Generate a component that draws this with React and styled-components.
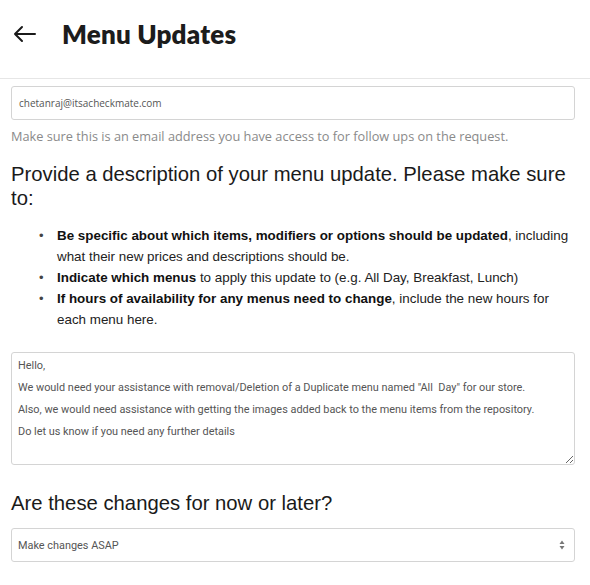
import React from "react";
import styled, { createGlobalStyle } from "styled-components";

const Global = createGlobalStyle`
  html, body { margin: 0; padding: 0; background: #fff; }
  body { font-family: "Liberation Sans", Arial, sans-serif; }
  * { box-sizing: border-box; }
`;

const Page = styled.div`
  width: 590px;
  display: flex;
  flex-direction: column;
`;

const Header = styled.header`
  display: flex;
  align-items: center;
  gap: 26px;
  height: 79px;
  padding: 0 0 10px 13px;
  border-bottom: 1px solid #e6e6e6;
`;

const BackButton = styled.button`
  display: flex;
  align-items: center;
  justify-content: center;
  padding: 0;
  border: none;
  background: none;
  width: 23px;
  height: 23px;
  color: #1a1a1a;
`;

const Title = styled.h1`
  margin: 0;
  font-family: "Lato", sans-serif;
  font-weight: 800;
  font-size: 26px;
  color: #1c1c1c;
  letter-spacing: 0.2px;
`;

const Body = styled.main`
  display: flex;
  flex-direction: column;
  padding: 7px 15px 0 11px;
`;

const Field = styled.div`
  height: 34px;
  display: flex;
  align-items: center;
  padding: 0 7px;
  border: 1px solid #d4d4d4;
  border-radius: 3px;
  font-family: "Open Sans", sans-serif;
  font-size: 10px;
  color: #555;
`;

const Help = styled.p`
  margin: 7px 0 0;
  font-family: "Open Sans", sans-serif;
  font-size: 12.75px;
  color: #8a8a8a;
`;

const Heading = styled.h2`
  margin: ${(p) => p.$top}px 0 0;
  font-family: "Liberation Sans", Arial, sans-serif;
  font-weight: 400;
  font-size: 20.3px;
  line-height: 24px;
  color: #1a1a1a;
`;

const List = styled.ul`
  margin: 15px 0 0;
  padding-left: 46px;
  list-style: none;
  font-size: 13.4px;
  line-height: 21px;
  color: #222;
`;

const Item = styled.li`
  &::before {
    content: "•";
    display: inline-block;
    width: 18px;
    margin-left: -18px;
    color: #444;
    font-size: 13px;
  }
`;

const Strong = styled.b`
  color: #111;
`;

const TextArea = styled.textarea`
  margin-top: 22px;
  height: 113px;
  width: 100%;
  resize: vertical;
  padding: 2px 6px;
  border: 1px solid #d4d4d4;
  border-radius: 3px;
  font-family: "Roboto", sans-serif;
  font-size: 10.9px;
  line-height: 22px;
  color: #555;
  outline: none;
`;

const SelectBox = styled(Field)`
  margin-top: 13px;
  font-family: "Roboto", sans-serif;
  font-size: 10.9px;
  padding: 0 6px;
  justify-content: space-between;
`;

const Arrows = styled.svg`
  width: 8px;
  height: 12px;
  margin-right: 2px;
`;

const text = `Hello,
We would need your assistance with removal/Deletion of a Duplicate menu named "All  Day" for our store.
Also, we would need assistance with getting the images added back to the menu items from the repository.
Do let us know if you need any further details`;

export default function App() {
  return (
    <Page>
      <Global />
      <Header>
        <BackButton aria-label="Back">
          <svg width="23" height="18" viewBox="0 0 23 18" fill="none" stroke="currentColor" strokeWidth="2" strokeLinecap="round" strokeLinejoin="round">
            <path d="M22 9H2M9 2L2 9l7 7" />
          </svg>
        </BackButton>
        <Title>Menu Updates</Title>
      </Header>
      <Body>
        <Field>chetanraj@itsacheckmate.com</Field>
        <Help>Make sure this is an email address you have access to for follow ups on the request.</Help>
        <Heading $top={17}>Provide a description of your menu update. Please make sure to:</Heading>
        <List>
          <Item><Strong>Be specific about which items, modifiers or options should be updated</Strong>, including what their new prices and descriptions should be.</Item>
          <Item><Strong>Indicate which menus</Strong> to apply this update to (e.g. All Day, Breakfast, Lunch)</Item>
          <Item><Strong>If hours of availability for any menus need to change</Strong>, include the new hours for each menu here.</Item>
        </List>
        <TextArea defaultValue={text} />
        <Heading $top={26}>Are these changes for now or later?</Heading>
        <SelectBox>
          <span>Make changes ASAP</span>
          <Arrows viewBox="0 0 8 12">
            <path d="M4 1.5L6.5 5H1.5z" fill="#777" />
            <path d="M4 10.5L6.5 7H1.5z" fill="#777" />
          </Arrows>
        </SelectBox>
      </Body>
    </Page>
  );
}
